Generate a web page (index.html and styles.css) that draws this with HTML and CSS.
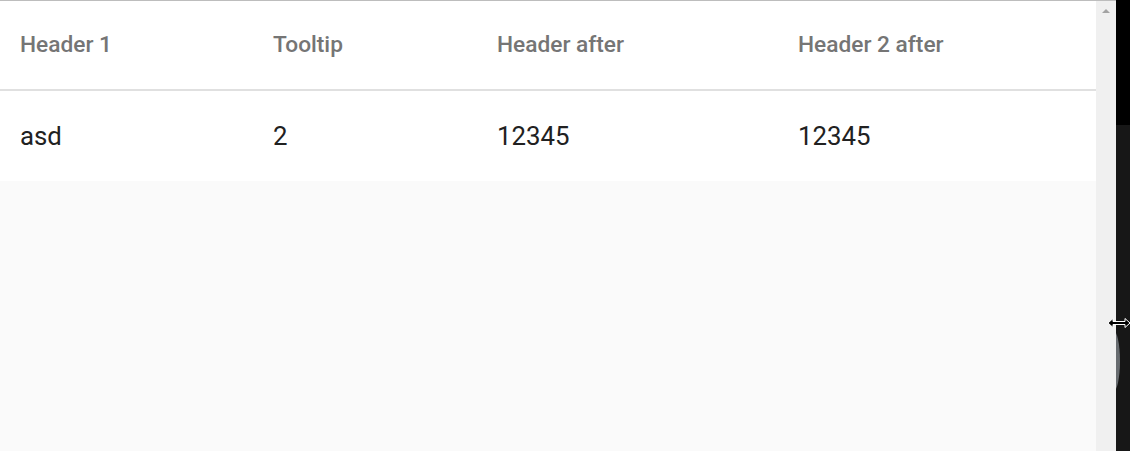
FILE: index.html
```html
<!DOCTYPE html>
<html>
<head>
<meta charset="utf-8">
<link rel="stylesheet" href="styles.css">
</head>
<body>
<div class="screen">
  <div class="frame">
    <div class="content">
      <div class="table">
        <div class="row head">
          <div class="cell c1">Header 1</div>
          <div class="cell c2">Tooltip</div>
          <div class="cell c3">Header after</div>
          <div class="cell c4">Header 2 after</div>
        </div>
        <div class="row body">
          <div class="cell c1">asd</div>
          <div class="cell c2">2</div>
          <div class="cell c3">12345</div>
          <div class="cell c4">12345</div>
        </div>
      </div>
    </div>
    <div class="scrollbar">
      <div class="arrow"></div>
    </div>
  </div>
  <div class="strip">
    <div class="strip-top"></div>
    <div class="strip-bottom">
      <div class="ghost"></div>
    </div>
  </div>
</div>
<svg class="cursor" width="24" height="12" viewBox="0 0 24 12">
  <path d="M1 6 L6 1.5 L6 4.5 L18 4.5 L18 1.5 L23 6 L18 10.5 L18 7.5 L6 7.5 L6 10.5 Z" fill="#000" stroke="#fff" stroke-width="1"/>
</svg>
</body>
</html>
```

FILE: styles.css
```css
html, body {
  margin: 0;
  padding: 0;
  height: 100%;
  overflow: hidden;
}
body {
  font-family: Roboto, "Noto Sans", sans-serif;
  background: #fafafa;
}
.screen {
  display: flex;
  width: 1130px;
  height: 451px;
}
.frame {
  display: flex;
  width: 1116px;
  border-top: 1px solid #bdbdbd;
  box-sizing: border-box;
}
.content {
  width: 1096px;
  background: #fafafa;
}
.table {
  background: #fff;
}
.row {
  display: grid;
  grid-template-columns: 253px 224px 301px 318px;
  align-items: center;
}
.head {
  height: 88px;
  border-bottom: 2px solid #e0e0e0;
}
.body {
  height: 90px;
}
.cell {
  padding-left: 20px;
  white-space: nowrap;
}
.head .cell {
  font-size: 22.7px;
  font-weight: 500;
  color: #757575;
  margin-top: -2px;
}
.body .cell {
  font-size: 25.8px;
  color: #212121;
}
.scrollbar {
  width: 20px;
  background: #f0f0f0;
}
.arrow {
  margin: 8px auto 0;
  width: 0;
  height: 0;
  border-left: 4px solid transparent;
  border-right: 4px solid transparent;
  border-bottom: 4px solid #a3a3a3;
}
.strip {
  width: 14px;
  display: flex;
  flex-direction: column;
}
.strip-top {
  height: 125px;
  background: #000;
}
.strip-bottom {
  flex: 1;
  background: #171717;
  position: relative;
  overflow: hidden;
}
.ghost {
  position: absolute;
  left: -10px;
  top: 205px;
  width: 14px;
  height: 62px;
  border-radius: 50%;
  background: #8a9096;
  opacity: 0.7;
}
.cursor {
  position: absolute;
  left: 1107px;
  top: 317px;
}
```
